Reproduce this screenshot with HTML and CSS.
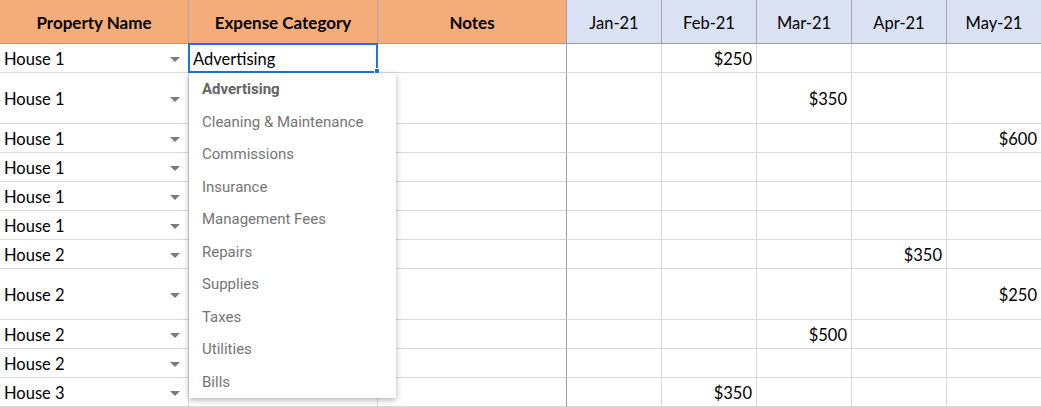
FILE: index.html
```html
<!DOCTYPE html>
<html lang="en">
<head>
  <meta charset="UTF-8" />
  <title>Property Expenses</title>
  <link rel="stylesheet" href="styles.css">
</head>
<body>

  <div class="sheet">
    <div class="row head">
      <div class="cell hd orange">Property Name</div>
      <div class="cell hd orange">Expense Category</div>
      <div class="cell hd orange split">Notes</div>
      <div class="cell hd blue">Jan-21</div>
      <div class="cell hd blue">Feb-21</div>
      <div class="cell hd blue">Mar-21</div>
      <div class="cell hd blue">Apr-21</div>
      <div class="cell hd blue">May-21</div>
    </div>

    <div class="row">
      <div class="cell pick">House 1<span class="arrow"></span></div>
      <div class="cell selected">Advertising<span class="handle"></span></div>
      <div class="cell split"></div>
      <div class="cell num"></div>
      <div class="cell num">$250</div>
      <div class="cell num"></div>
      <div class="cell num"></div>
      <div class="cell num"></div>
    </div>

    <div class="row tall">
      <div class="cell pick">House 1<span class="arrow"></span></div>
      <div class="cell pick"><span class="arrow"></span></div>
      <div class="cell split"></div>
      <div class="cell num"></div>
      <div class="cell num"></div>
      <div class="cell num">$350</div>
      <div class="cell num"></div>
      <div class="cell num"></div>
    </div>

    <div class="row">
      <div class="cell pick">House 1<span class="arrow"></span></div>
      <div class="cell pick"><span class="arrow"></span></div>
      <div class="cell split"></div>
      <div class="cell num"></div>
      <div class="cell num"></div>
      <div class="cell num"></div>
      <div class="cell num"></div>
      <div class="cell num">$600</div>
    </div>

    <div class="row">
      <div class="cell pick">House 1<span class="arrow"></span></div>
      <div class="cell pick"><span class="arrow"></span></div>
      <div class="cell split"></div>
      <div class="cell num"></div>
      <div class="cell num"></div>
      <div class="cell num"></div>
      <div class="cell num"></div>
      <div class="cell num"></div>
    </div>

    <div class="row">
      <div class="cell pick">House 1<span class="arrow"></span></div>
      <div class="cell pick"><span class="arrow"></span></div>
      <div class="cell split"></div>
      <div class="cell num"></div>
      <div class="cell num"></div>
      <div class="cell num"></div>
      <div class="cell num"></div>
      <div class="cell num"></div>
    </div>

    <div class="row">
      <div class="cell pick">House 1<span class="arrow"></span></div>
      <div class="cell pick"><span class="arrow"></span></div>
      <div class="cell split"></div>
      <div class="cell num"></div>
      <div class="cell num"></div>
      <div class="cell num"></div>
      <div class="cell num"></div>
      <div class="cell num"></div>
    </div>

    <div class="row">
      <div class="cell pick">House 2<span class="arrow"></span></div>
      <div class="cell pick"><span class="arrow"></span></div>
      <div class="cell split"></div>
      <div class="cell num"></div>
      <div class="cell num"></div>
      <div class="cell num"></div>
      <div class="cell num">$350</div>
      <div class="cell num"></div>
    </div>

    <div class="row tall">
      <div class="cell pick">House 2<span class="arrow"></span></div>
      <div class="cell pick"><span class="arrow"></span></div>
      <div class="cell split"></div>
      <div class="cell num"></div>
      <div class="cell num"></div>
      <div class="cell num"></div>
      <div class="cell num"></div>
      <div class="cell num">$250</div>
    </div>

    <div class="row">
      <div class="cell pick">House 2<span class="arrow"></span></div>
      <div class="cell pick"><span class="arrow"></span></div>
      <div class="cell split"></div>
      <div class="cell num"></div>
      <div class="cell num"></div>
      <div class="cell num">$500</div>
      <div class="cell num"></div>
      <div class="cell num"></div>
    </div>

    <div class="row">
      <div class="cell pick">House 2<span class="arrow"></span></div>
      <div class="cell pick"><span class="arrow"></span></div>
      <div class="cell split"></div>
      <div class="cell num"></div>
      <div class="cell num"></div>
      <div class="cell num"></div>
      <div class="cell num"></div>
      <div class="cell num"></div>
    </div>

    <div class="row">
      <div class="cell pick">House 3<span class="arrow"></span></div>
      <div class="cell pick"><span class="arrow"></span></div>
      <div class="cell split"></div>
      <div class="cell num"></div>
      <div class="cell num">$350</div>
      <div class="cell num"></div>
      <div class="cell num"></div>
      <div class="cell num"></div>
    </div>

    <!-- Expense Category dropdown -->
    <ul class="menu">
      <li class="current">Advertising</li>
      <li>Cleaning &amp; Maintenance</li>
      <li>Commissions</li>
      <li>Insurance</li>
      <li>Management Fees</li>
      <li>Repairs</li>
      <li>Supplies</li>
      <li>Taxes</li>
      <li>Utilities</li>
      <li>Bills</li>
    </ul>
  </div>

</body>
</html>
```

FILE: styles.css
```css
* { margin: 0; padding: 0; box-sizing: border-box; }

body {
  font-family: Lato, "Liberation Sans", sans-serif;
  font-size: 16.5px;
  color: #000;
  background: #fff;
  width: 1041px;
  height: 407px;
  overflow: hidden;
}

.sheet {
  position: relative;
  width: 1042px;
}

.row {
  display: grid;
  grid-template-columns: 189px 189px 189px repeat(5, 95px);
  height: 29px;
}
.row.tall { height: 51px; }
.row.head { height: 44px; }

.cell {
  display: flex;
  align-items: center;
  padding: 2px 4px 0;
  border-right: 1px solid #dadada;
  border-bottom: 1px solid #dadada;
  white-space: nowrap;
  overflow: hidden;
}
.cell.split { border-right-color: #9e9e9e; }

.hd {
  justify-content: center;
  border-right-color: #a8a8a8;
  border-bottom-color: #9e9e9e;
}
.orange { background-color: #f4ac7b; font-weight: bold; font-size: 17px; }
.blue { background-color: #d9e1f2; }
.hd.split { border-right-color: #9e9e9e; }

.pick {
  justify-content: space-between;
  padding-right: 8px;
}

.arrow {
  width: 0;
  height: 0;
  border-left: 5px solid transparent;
  border-right: 5px solid transparent;
  border-top: 5px solid #7a7a7a;
}

.num { justify-content: flex-end; }

.selected {
  position: relative;
  overflow: visible;
}
.selected::before {
  content: "";
  position: absolute;
  top: -1px;
  left: -1px;
  right: -1px;
  bottom: -1px;
  border: 2px solid #1a73e8;
}
.handle {
  position: absolute;
  right: -3px;
  bottom: -2px;
  width: 6px;
  height: 6px;
  background: #1a73e8;
  border: 1px solid #fff;
  z-index: 2;
}

.menu {
  position: absolute;
  top: 73px;
  left: 189px;
  width: 207px;
  height: 325px;
  list-style: none;
  background: #fff;
  box-shadow: 0 2px 6px rgba(0, 0, 0, 0.3);
  font-family: Roboto, "Liberation Sans", sans-serif;
  font-size: 15px;
  color: #757575;
  z-index: 3;
}
.menu li {
  height: 32.5px;
  line-height: 32.5px;
  padding-left: 13px;
}
.menu li.current {
  font-weight: bold;
  color: #646464;
}
```
